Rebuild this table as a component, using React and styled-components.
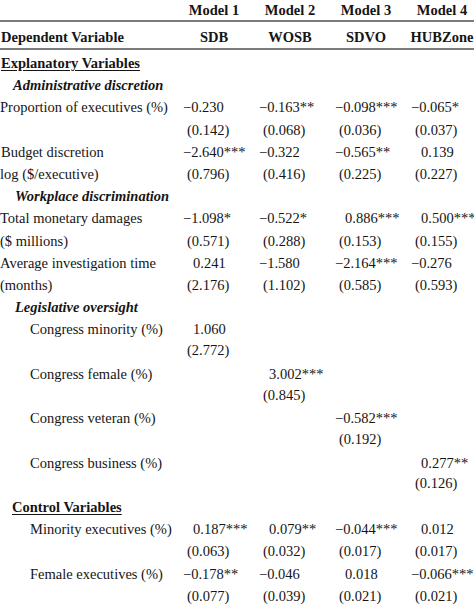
import React from 'react'
import styled, { createGlobalStyle } from 'styled-components'

const GlobalStyle = createGlobalStyle`
   html, body {
      margin: 0;
      padding: 0;
      background: #ffffff;
   }
   body {
      font-family: 'Liberation Serif', 'Times New Roman', serif;
      font-size: 14.5px;
      color: #151515;
   }
`

const MODELS = [
   { model: 'Model 1', dep: 'SDB' },
   { model: 'Model 2', dep: 'WOSB' },
   { model: 'Model 3', dep: 'SDVO' },
   { model: 'Model 4', dep: 'HUBZone' },
]

// kind: section | sub | row ; tight marks the congress standard-error lines
const ROWS = [
   { kind: 'section', text: 'Explanatory Variables', indent: 1 },
   { kind: 'sub', text: 'Administrative discretion', indent: 13 },
   { kind: 'row', label: 'Proportion of executives (%)', values: ['−0.230', '−0.163**', '−0.098***', '−0.065*'] },
   { kind: 'row', label: '', values: ['(0.142)', '(0.068)', '(0.036)', '(0.037)'] },
   { kind: 'row', label: 'Budget discretion', indent: 1, values: ['−2.640***', '−0.322', '−0.565**', '0.139'] },
   { kind: 'row', label: 'log ($/executive)', values: ['(0.796)', '(0.416)', '(0.225)', '(0.227)'] },
   { kind: 'sub', text: 'Workplace discrimination', indent: 15 },
   { kind: 'row', label: 'Total monetary damages', values: ['−1.098*', '−0.522*', '0.886***', '0.500***'] },
   { kind: 'row', label: '($ millions)', values: ['(0.571)', '(0.288)', '(0.153)', '(0.155)'] },
   { kind: 'row', label: 'Average investigation time', values: ['0.241', '−1.580', '−2.164***', '−0.276'] },
   { kind: 'row', label: '(months)', values: ['(2.176)', '(1.102)', '(0.585)', '(0.593)'] },
   { kind: 'sub', text: 'Legislative oversight', indent: 15 },
   { kind: 'row', label: 'Congress minority (%)', indent: 30, values: ['1.060', '', '', ''] },
   { kind: 'row', label: '', tight: true, values: ['(2.772)', '', '', ''] },
   { kind: 'row', label: 'Congress female (%)', indent: 30, values: ['', '3.002***', '', ''] },
   { kind: 'row', label: '', tight: true, values: ['', '(0.845)', '', ''] },
   { kind: 'row', label: 'Congress veteran (%)', indent: 30, values: ['', '', '−0.582***', ''] },
   { kind: 'row', label: '', tight: true, values: ['', '', '(0.192)', ''] },
   { kind: 'row', label: 'Congress business (%)', indent: 30, values: ['', '', '', '0.277**'] },
   { kind: 'row', label: '', tight: true, values: ['', '', '', '(0.126)'] },
   { kind: 'section', text: 'Control Variables', indent: 12 },
   { kind: 'row', label: 'Minority executives (%)', indent: 30, values: ['0.187***', '0.079**', '−0.044***', '0.012'] },
   { kind: 'row', label: '', values: ['(0.063)', '(0.032)', '(0.017)', '(0.017)'] },
   { kind: 'row', label: 'Female executives (%)', indent: 30, values: ['−0.178**', '−0.046', '0.018', '−0.066***'] },
   { kind: 'row', label: '', values: ['(0.077)', '(0.039)', '(0.021)', '(0.021)'] },
]

const offsetFor = (v) => {
   if (v.startsWith('−')) return 7
   if (v.startsWith('(')) return 11
   return 17
}

const App = () => (
   <>
      <GlobalStyle />
      <Table>
         <HeadRow>
            <span />
            {MODELS.map((m) => (
               <HeadCell key={m.model}>{m.model}</HeadCell>
            ))}
         </HeadRow>
         <Rule />
         <DepRow>
            <HeadLabel>Dependent Variable</HeadLabel>
            {MODELS.map((m) => (
               <HeadCell key={m.dep}>{m.dep}</HeadCell>
            ))}
         </DepRow>
         <Rule />
         <Body>
            {ROWS.map((r, i) => {
               if (r.kind === 'section') {
                  return (
                     <SectionTitle key={i} $indent={r.indent}>
                        {r.text}
                     </SectionTitle>
                  )
               }
               if (r.kind === 'sub') {
                  return (
                     <SubTitle key={i} $indent={r.indent}>
                        {r.text}
                     </SubTitle>
                  )
               }
               return (
                  <DataRow key={i} $tight={r.tight}>
                     <Label $indent={r.indent || 0}>{r.label}</Label>
                     {r.values.map((v, j) => (
                        <Value key={j} $offset={v ? offsetFor(v) : 0}>
                           {v}
                        </Value>
                     ))}
                  </DataRow>
               )
            })}
         </Body>
      </Table>
   </>
)

export default App

const Table = styled.div`
   width: 474px;
   height: 605px;
   overflow: hidden;
`
const Grid = styled.div`
   display: grid;
   grid-template-columns: 176px 76px 76px 76px 76px;
   width: 480px;
   white-space: nowrap;
`
const HeadRow = styled(Grid)`
   font-weight: bold;
   line-height: 20px;
`
const DepRow = styled(Grid)`
   font-weight: bold;
   line-height: 22px;
   padding-top: 4px;
`
const HeadLabel = styled.span`
   padding-left: 1px;
`
const HeadCell = styled.span`
   text-align: center;
`
const Rule = styled.div`
   height: 2px;
   background: #7c7c7c;
`
const Body = styled.div`
   padding-top: 2px;
   line-height: 22.2px;
`
const SectionTitle = styled.div`
   font-weight: bold;
   text-decoration: underline;
   text-underline-offset: 2px;
   padding-left: ${(p) => p.$indent}px;
`
const SubTitle = styled.div`
   font-weight: bold;
   font-style: italic;
   padding-left: ${(p) => p.$indent}px;
`
const DataRow = styled(Grid)`
   margin-top: ${(p) => (p.$tight ? '-1.5px' : '0')};
   margin-bottom: ${(p) => (p.$tight ? '1.5px' : '0')};
`
const Label = styled.span`
   padding-left: ${(p) => p.$indent}px;
`
const Value = styled.span`
   padding-left: ${(p) => p.$offset}px;
`
